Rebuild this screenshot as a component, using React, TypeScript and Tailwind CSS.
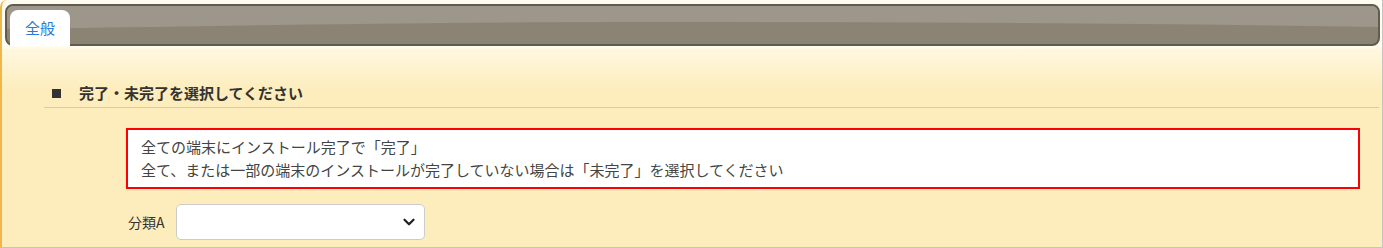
import { ChevronDown } from "lucide-react";

const font = { fontFamily: '"Noto Sans CJK JP", "Noto Sans", sans-serif' };

export default function App() {
  return (
    <div
      style={font}
      className="h-[248px] w-[1383px] overflow-hidden rounded-tl-[7px] border-b border-l-2 border-r border-b-[#c4c4c4] border-l-[#f1b54a] border-r-[#c4c4c4] bg-[linear-gradient(to_bottom,#fffcf2_0px,#fffcf2_46px,#fff7de_50px,#fdedbd_90px,#fdedbd_100%)]"
    >
      {/* tab bar */}
      <div className="relative ml-[3px] mr-[2px] mt-[4px] flex h-[42px] items-end overflow-visible rounded-[8px] border-2 border-[#625c4d] bg-[#8b8373] pl-[3px]">
        <svg
          className="absolute inset-0 h-full w-full rounded-[6px]"
          viewBox="0 0 1000 40"
          preserveAspectRatio="none"
        >
          <path
            d="M0 0 H1000 V22 C800 18 600 16 400 17 C250 18 120 22 0 24 Z"
            fill="#9d968a"
          />
        </svg>
        <div className="relative z-10 mb-[-2px] flex h-[36px] w-[60px] items-center justify-center rounded-t-[8px] bg-white text-[15px] text-[#2b7bd6]">
          全般
        </div>
      </div>

      {/* section heading */}
      <div className="ml-[42px] mr-[3px] mt-[36px] flex items-center border-b border-[#cfcbc0] pb-[3px] text-[15px] font-bold leading-[22px] text-[#333333]">
        <span className="ml-[8px] inline-block h-[9px] w-[9px] bg-[#333333]" />
        <span className="ml-[18px]">完了・未完了を選択してください</span>
      </div>

      {/* notice box */}
      <div className="ml-[124px] mt-[20px] w-[1234px] border-2 border-[#ff0000] bg-white pb-[6px] pl-[13px] pt-[5px] text-[15px] leading-[23px] text-[#444444]">
        <p>全ての端末にインストール完了で「完了」</p>
        <p>全て、または一部の端末のインストールが完了していない場合は「未完了」を選択してください</p>
      </div>

      {/* select row */}
      <div className="ml-[126px] mt-[15px] flex items-center gap-[11px]">
        <span className="text-[14px] text-[#333333]">分類A</span>
        <div className="flex h-[36px] w-[249px] items-center justify-end rounded-[5px] border border-[#cccccc] bg-white pr-[6px]">
          <ChevronDown className="h-[18px] w-[18px] text-[#222222]" strokeWidth={3} />
        </div>
      </div>
    </div>
  );
}
